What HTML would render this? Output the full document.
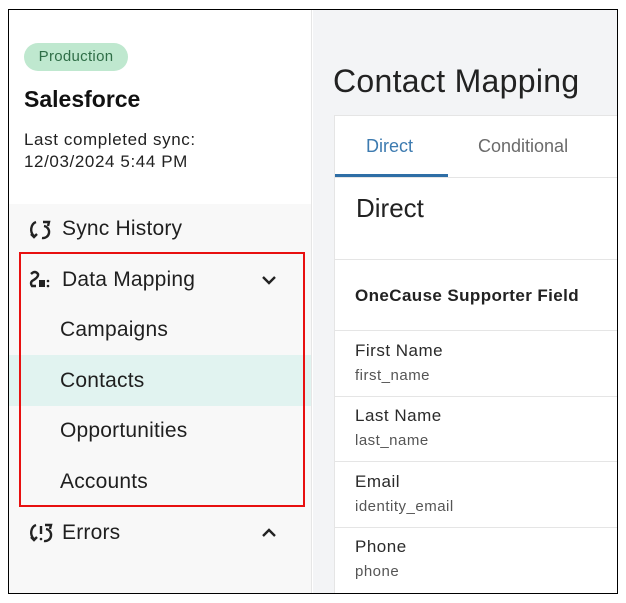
<!DOCTYPE html>
<html><head><meta charset="utf-8"><style>
*{margin:0;padding:0;box-sizing:border-box}
body{width:626px;height:603px;background:#fff;font-family:"Liberation Sans",sans-serif;color:#1f1f1f;position:relative;overflow:hidden}
.a{position:absolute;white-space:nowrap}
#frame{position:absolute;left:8px;top:9px;width:610px;height:585px;border:1px solid #000;overflow:hidden}
#side{position:absolute;left:0;top:0;width:303px;height:585px;background:#f8f8f8;border-right:1px solid #e6e6e6}
#main{position:absolute;left:304px;top:0;width:310px;height:585px;background:#f3f4f6}
.card{position:absolute;left:21px;top:105px;width:300px;height:480px;background:#fff;border:1px solid #e5e5e5}
.hl{position:absolute;left:0;width:300px;height:1px;background:#e5e5e5}
.n{font-size:21px;letter-spacing:.2px}
.f{font-size:17px;letter-spacing:.5px;color:#2a2a2a}
.v{font-size:15px;letter-spacing:.5px;color:#555}
</style></head><body>
<div id="frame">
<div id="side">
 <div class="a" style="left:0;top:0;width:302px;height:194px;background:#fff"></div>
 <div class="a" style="left:15px;top:33px;width:104px;height:28px;border-radius:14px;background:#bfe8cf;color:#2f6e47;font-size:15px;letter-spacing:.3px;line-height:28px;text-align:center">Production</div>
 <div class="a" style="left:15px;top:76px;font-size:23px;font-weight:bold;color:#111">Salesforce</div>
 <div class="a" style="left:15px;top:119px;font-size:17px;letter-spacing:.6px;line-height:22px;color:#222">Last completed sync:<br>12/03/2024 5:44 PM</div>
 <svg class="a" style="left:19px;top:209px" width="24" height="22" viewBox="0 0 24 22" fill="none" stroke="#222" stroke-width="2.4"><path d="M8 3 A7 8 0 0 0 6 17"/><path d="M3 15 l3 3 l3 -3"/><path d="M15 3 h6 l-1 4"/><path d="M16 7 A6 6 0 0 1 14 19"/></svg>
 <div class="a n" style="left:53px;top:207px">Sync History</div>
 <svg class="a" style="left:19px;top:259px" width="24" height="22" viewBox="0 0 24 22" fill="none" stroke="#222" stroke-width="2.4"><path d="M3 5 Q7 1 10 5 Q11 8 4 12 Q2 14 4 17 H8"/><rect x="11" y="11" width="6" height="7" fill="#222" stroke="none"/><circle cx="20" cy="12" r="1.3" fill="#222" stroke="none"/><circle cx="20" cy="17" r="1.3" fill="#222" stroke="none"/></svg>
 <div class="a n" style="left:53px;top:258px">Data Mapping</div>
 <svg class="a" style="left:252px;top:264px" width="16" height="12" viewBox="0 0 16 12" fill="none" stroke="#222" stroke-width="2.4"><path d="M2 3 l6 6 l6 -6"/></svg>
 <div class="a" style="left:0;top:345px;width:302px;height:51px;background:#e1f3f0"></div>
 <div class="a n" style="left:51px;top:308px">Campaigns</div>
 <div class="a n" style="left:51px;top:359px">Contacts</div>
 <div class="a n" style="left:51px;top:409px">Opportunities</div>
 <div class="a n" style="left:51px;top:460px">Accounts</div>
 <div class="a" style="left:10px;top:242px;width:286px;height:255px;border:2px solid #e81010"></div>
 <svg class="a" style="left:19px;top:512px" width="26" height="22" viewBox="0 0 26 22" fill="none" stroke="#222" stroke-width="2.4"><path d="M8 3 A7 8 0 0 0 6 17"/><path d="M3 15 l3 3 l3 -3"/><path d="M13 4 v8"/><circle cx="13" cy="17" r="1.3" fill="#222" stroke="none"/><path d="M17 3 h6 l-1 4"/><path d="M18 7 A6 6 0 0 1 16 19"/></svg>
 <div class="a n" style="left:53px;top:511px">Errors</div>
 <svg class="a" style="left:252px;top:517px" width="16" height="12" viewBox="0 0 16 12" fill="none" stroke="#222" stroke-width="2.4"><path d="M2 9 l6 -6 l6 6"/></svg>
</div>
<div id="main">
 <div class="a" style="left:20px;top:53px;font-size:32px;letter-spacing:.3px;color:#222">Contact Mapping</div>
 <div class="card">
  <div class="a" style="left:31px;top:20px;font-size:18px;color:#3d7bb0">Direct</div>
  <div class="a" style="left:143px;top:20px;font-size:18px;color:#6a6a6a">Conditional</div>
  <div class="a" style="left:0;top:58px;width:113px;height:3px;background:#2e6ea6"></div>
  <div class="hl" style="top:61px"></div>
  <div class="a" style="left:21px;top:77px;font-size:26px;color:#222">Direct</div>
  <div class="hl" style="top:143px"></div>
  <div class="a" style="left:20px;top:170px;font-size:17px;letter-spacing:.4px;font-weight:bold;color:#222">OneCause Supporter Field</div>
  <div class="hl" style="top:214px"></div>
  <div class="a f" style="left:20px;top:225px">First Name</div>
  <div class="a v" style="left:20px;top:251px">first_name</div>
  <div class="hl" style="top:280px"></div>
  <div class="a f" style="left:20px;top:290px">Last Name</div>
  <div class="a v" style="left:20px;top:316px">last_name</div>
  <div class="hl" style="top:345px"></div>
  <div class="a f" style="left:20px;top:356px">Email</div>
  <div class="a v" style="left:20px;top:382px">identity_email</div>
  <div class="hl" style="top:411px"></div>
  <div class="a f" style="left:20px;top:421px">Phone</div>
  <div class="a v" style="left:20px;top:447px">phone</div>
 </div>
</div>
</div>
</body></html>
